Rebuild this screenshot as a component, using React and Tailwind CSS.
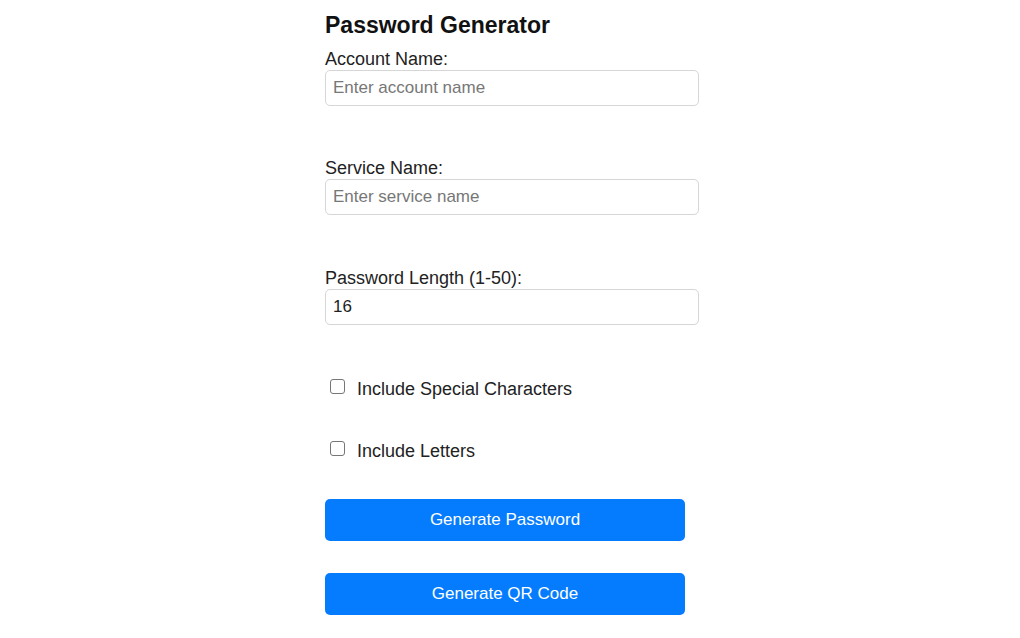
import { useState } from 'react';

const FIELDS = [
  { id: 'account', label: 'Account Name:', placeholder: 'Enter account name', mt: 'mt-[10px]' },
  { id: 'service', label: 'Service Name:', placeholder: 'Enter service name', mt: 'mt-[52px]' },
  { id: 'length', label: 'Password Length (1-50):', placeholder: '', mt: 'mt-[53px]', value: '16' },
];

function Checkbox({ label, checked, onChange, className }) {
  return (
    <label className={`flex items-center h-[22px] cursor-pointer ${className}`}>
      <input
        type="checkbox"
        checked={checked}
        onChange={onChange}
        className="appearance-none ml-[5px] mb-[5px] w-[15px] h-[15px] border border-[#767676] rounded-[3px] bg-white checked:bg-[#007bff] checked:border-[#007bff]"
      />
      <span className="ml-[12px] text-[18px] leading-[22px] text-[#222]">{label}</span>
    </label>
  );
}

export default function App() {
  const [length, setLength] = useState('16');
  const [special, setSpecial] = useState(false);
  const [letters, setLetters] = useState(false);

  return (
    <div className="w-[1020px] h-[638px] bg-white font-['Liberation_Sans',Arial,sans-serif] overflow-hidden">
      <div className="ml-[325px] pt-[11px] w-[374px]">
        <h2 className="text-[23px] leading-[28px] font-bold text-[#111]">Password Generator</h2>

        {FIELDS.map(f => (
          <div key={f.id} className={f.mt}>
            <label htmlFor={f.id} className="block text-[18px] leading-[21px] text-[#222]">{f.label}</label>
            <input
              id={f.id}
              type={f.id === 'length' ? 'number' : 'text'}
              placeholder={f.placeholder}
              value={f.id === 'length' ? length : undefined}
              onChange={f.id === 'length' ? e => setLength(e.target.value) : undefined}
              className="block w-[374px] h-[36px] px-[7px] text-[17px] text-[#222] placeholder:text-[#777] border border-[#d6d6d6] rounded-[5px] outline-none [appearance:textfield]"
            />
          </div>
        ))}

        <Checkbox
          label="Include Special Characters"
          checked={special}
          onChange={() => setSpecial(!special)}
          className="mt-[53px]"
        />
        <Checkbox
          label="Include Letters"
          checked={letters}
          onChange={() => setLetters(!letters)}
          className="mt-[40px]"
        />

        <button
          type="button"
          className="block mt-[37px] w-[360px] h-[42px] bg-[#057cfe] text-white text-[17px] rounded-[5px] cursor-pointer"
        >
          Generate Password
        </button>
        <button
          type="button"
          className="block mt-[32px] w-[360px] h-[42px] bg-[#057cfe] text-white text-[17px] rounded-[5px] cursor-pointer"
        >
          Generate QR Code
        </button>
      </div>
    </div>
  );
}
